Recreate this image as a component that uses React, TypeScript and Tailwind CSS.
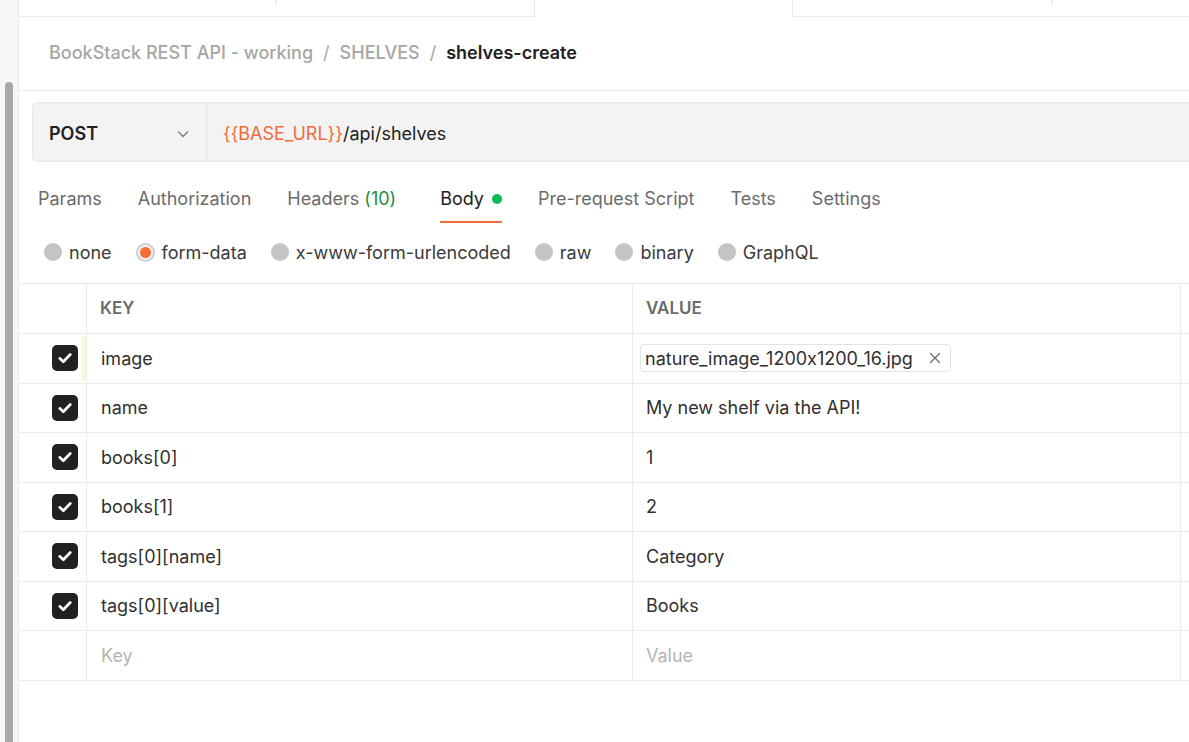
import React from "react";

const Check = () => (
  <div className="w-[26px] h-[26px] rounded-[5px] bg-[#212121] flex items-center justify-center">
    <svg width="18" height="18" viewBox="0 0 16 16" fill="none">
      <path d="M3.3 8.3 L6.5 11.3 L12.7 4.9" stroke="white" strokeWidth="2.4" strokeLinecap="round" strokeLinejoin="round" />
    </svg>
  </div>
);

type Row = { key: string; value: string; file?: boolean };
const rows: Row[] = [
  { key: "image", value: "nature_image_1200x1200_16.jpg", file: true },
  { key: "name", value: "My new shelf via the API!" },
  { key: "books[0]", value: "1" },
  { key: "books[1]", value: "2" },
  { key: "tags[0][name]", value: "Category" },
  { key: "tags[0][value]", value: "Books" },
];

const Radio = ({ label, selected }: { label: string; selected?: boolean }) => (
  <div className="flex items-center gap-[7px]">
    {selected ? (
      <div className="w-[19px] h-[19px] rounded-full bg-[#cfcfcf] flex items-center justify-center">
        <div className="w-[15px] h-[15px] rounded-full bg-[#f2f2f2] flex items-center justify-center">
          <div className="w-[11px] h-[11px] rounded-full bg-[#f46c35]" />
        </div>
      </div>
    ) : (
      <div className="w-[18px] h-[18px] rounded-full bg-[#c4c4c4]" />
    )}
    <span className="text-[#3a3a3a]">{label}</span>
  </div>
);

export default function App() {
  return (
    <div
      className="w-[1189px] h-[742px] flex overflow-hidden bg-white text-[18px] [font-variant-ligatures:no-contextual]"
      style={{ fontFamily: "Inter, 'Noto Sans', sans-serif" }}
    >
      {/* left scrollbar strip */}
      <div className="w-[19px] shrink-0 bg-[#f6f6f6] border-r border-[#ececec] flex flex-col pt-[82px]">
        <div className="ml-[5px] w-[8px] flex-1 rounded-t-full bg-[#a8a8a8]" />
      </div>

      <div className="flex-1 flex flex-col min-w-0">
        {/* top tab strip */}
        <div className="h-[17px] flex shrink-0">
          <div className="w-[516px] border-b border-r border-[#ebebeb] flex">
            <div className="ml-[257px] w-px h-[3px] bg-[#dcdcdc]" />
          </div>
          <div className="w-[258px] border-r border-[#ebebeb]" />
          <div className="flex-1 border-b border-[#ebebeb] flex">
            <div className="ml-[258px] w-px h-[3px] bg-[#dcdcdc]" />
          </div>
        </div>

        {/* breadcrumb */}
        <div className="h-[74px] shrink-0 border-b border-[#ebebeb] flex items-center pl-[30px] pb-[3px]">
          <span className="text-[#a6a6a6] font-medium">BookStack REST API - working</span>
          <span className="text-[#a6a6a6] mx-[10px]">/</span>
          <span className="text-[#a6a6a6] font-medium">SHELVES</span>
          <span className="text-[#a6a6a6] mx-[10px]">/</span>
          <span className="text-[#212121] font-semibold">shelves-create</span>
        </div>

        {/* url bar */}
        <div className="mt-[11px] ml-[13px] -mr-[10px] h-[60px] shrink-0 flex bg-[#f3f3f3] border border-[#e6e6e6] rounded-[5px]">
          <div className="w-[174px] border-r border-[#e3e3e3] flex items-center justify-between pl-[16px] pr-[16px] pt-[3px]">
            <span className="font-semibold text-[#212121]">POST</span>
            <svg width="14" height="14" viewBox="0 0 14 14" fill="none">
              <path d="M2.5 5 L7 9.5 L11.5 5" stroke="#7a7a7a" strokeWidth="1.3" strokeLinecap="round" strokeLinejoin="round" />
            </svg>
          </div>
          <div className="flex items-center pl-[16px] pt-[2px]">
            <span className="text-[#f26b3a]">{"{{BASE_URL}}"}</span>
            <span className="text-[#212121]">/api/shelves</span>
          </div>
        </div>

        {/* request tabs */}
        <div className="mt-[25px] ml-[19px] flex gap-[36px] shrink-0 text-[#6b6b6b]">
          <div className="leading-[24px] pb-[10px] border-b-2 border-transparent">Params</div>
          <div className="leading-[24px] pb-[10px] border-b-2 border-transparent">Authorization</div>
          <div className="leading-[24px] pb-[10px] border-b-2 border-transparent">
            Headers <span className="text-[#1e8e3e]">(10)</span>
          </div>
          <div className="ml-[8px] leading-[24px] pb-[10px] border-b-2 border-[#f26b3a] flex items-center gap-[8px] text-[#212121]">
            Body
            <div className="w-[10px] h-[10px] rounded-full bg-[#0cbb52]" />
          </div>
          <div className="leading-[24px] pb-[10px] border-b-2 border-transparent">Pre-request Script</div>
          <div className="leading-[24px] pb-[10px] border-b-2 border-transparent">Tests</div>
          <div className="leading-[24px] pb-[10px] border-b-2 border-transparent">Settings</div>
        </div>

        {/* body type radios */}
        <div className="mt-[16px] ml-[25px] h-[26px] flex items-center gap-[24px] shrink-0">
          <Radio label="none" />
          <Radio label="form-data" selected />
          <Radio label="x-www-form-urlencoded" />
          <Radio label="raw" />
          <Radio label="binary" />
          <Radio label="GraphQL" />
        </div>

        {/* table */}
        <div className="mt-[18px] border-t border-[#ebebeb] shrink-0">
          <div className="h-[50px] flex border-b border-[#ebebeb]">
            <div className="w-[68px] border-r border-[#ebebeb]" />
            <div className="w-[546px] border-r border-[#ebebeb] flex items-center pl-[13px] font-semibold text-[#6b6b6b] text-[17px]">
              KEY
            </div>
            <div className="w-[548px] border-r border-[#ebebeb] flex items-center pl-[13px] font-semibold text-[#6b6b6b] text-[17px]">
              VALUE
            </div>
          </div>
          {rows.map((r, i) => (
            <div key={r.key} className="h-[49.5px] flex border-b border-[#ebebeb]">
              <div className="w-[68px] border-r border-[#ebebeb] flex items-center justify-end pr-[8px] relative">
                <Check />
                {i === 0 && <div className="absolute right-0 top-[2px] bottom-[3px] w-[4px] bg-[#fdf6dc]" />}
              </div>
              <div className="w-[546px] border-r border-[#ebebeb] flex items-center pl-[14px] text-[#303030]">
                {r.key}
              </div>
              <div className="w-[548px] border-r border-[#ebebeb] flex items-center text-[#303030]">
                {r.file ? (
                  <div className="ml-[7px] h-[28px] flex items-center border border-[#e3e3e3] rounded-[4px] pl-[4px] pr-[9px] gap-[16px]">
                    <span>{r.value}</span>
                    <svg width="12" height="12" viewBox="0 0 12 12" fill="none">
                      <path d="M1.5 1.5 L10.5 10.5 M10.5 1.5 L1.5 10.5" stroke="#6b6b6b" strokeWidth="1.3" strokeLinecap="round" />
                    </svg>
                  </div>
                ) : (
                  <span className="pl-[13px]">{r.value}</span>
                )}
              </div>
            </div>
          ))}
          <div className="h-[49.5px] flex border-b border-[#ebebeb]">
            <div className="w-[68px] border-r border-[#ebebeb]" />
            <div className="w-[546px] border-r border-[#ebebeb] flex items-center pl-[14px] text-[#b5b5b5]">Key</div>
            <div className="w-[548px] border-r border-[#ebebeb] flex items-center pl-[13px] text-[#b5b5b5]">Value</div>
          </div>
        </div>
      </div>
    </div>
  );
}
